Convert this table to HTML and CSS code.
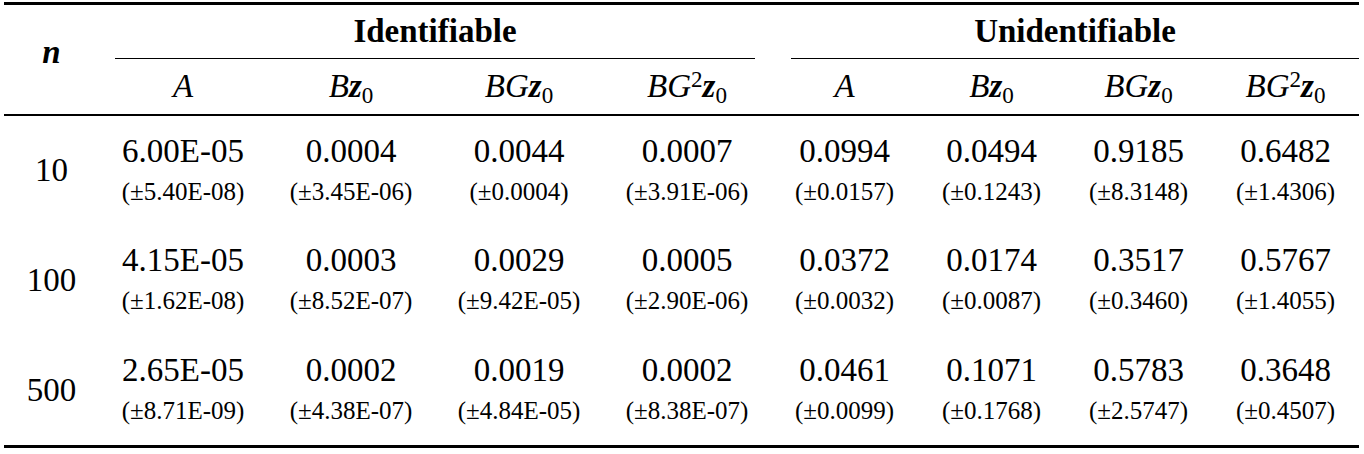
FILE: index.html
```html
<!DOCTYPE html>
<html lang="en">
<head>
    <meta charset="UTF-8">
    <meta name="viewport" content="width=device-width, initial-scale=1.0">
    <title>Identifiable vs Unidentifiable</title>
    <link rel="stylesheet" href="styles.css">
</head>
<body>
    <div class="table-wrap">
        <table class="results">
            <colgroup>
                <col class="col-n">
                <col class="col-id"><col class="col-id"><col class="col-id"><col class="col-id">
                <col class="col-un"><col class="col-un"><col class="col-un"><col class="col-un">
            </colgroup>
            <thead>
                <tr class="group-row">
                    <th rowspan="2" class="n-head"><b><i>n</i></b></th>
                    <th colspan="4"><div class="group trim-lr">Identifiable</div></th>
                    <th colspan="4"><div class="group trim-l">Unidentifiable</div></th>
                </tr>
                <tr class="col-row">
                    <th><i>A</i></th>
                    <th><i>B</i><b><i>z</i></b><sub>0</sub></th>
                    <th><i>BG</i><b><i>z</i></b><sub>0</sub></th>
                    <th><i>BG</i><sup>2</sup><b><i>z</i></b><sub>0</sub></th>
                    <th><i>A</i></th>
                    <th><i>B</i><b><i>z</i></b><sub>0</sub></th>
                    <th><i>BG</i><b><i>z</i></b><sub>0</sub></th>
                    <th><i>BG</i><sup>2</sup><b><i>z</i></b><sub>0</sub></th>
                </tr>
            </thead>
            <tbody>
                <tr>
                    <th>10</th>
                    <td><span class="val">6.00E-05</span><span class="err">(&plusmn;5.40E-08)</span></td>
                    <td><span class="val">0.0004</span><span class="err">(&plusmn;3.45E-06)</span></td>
                    <td><span class="val">0.0044</span><span class="err">(&plusmn;0.0004)</span></td>
                    <td><span class="val">0.0007</span><span class="err">(&plusmn;3.91E-06)</span></td>
                    <td><span class="val">0.0994</span><span class="err">(&plusmn;0.0157)</span></td>
                    <td><span class="val">0.0494</span><span class="err">(&plusmn;0.1243)</span></td>
                    <td><span class="val">0.9185</span><span class="err">(&plusmn;8.3148)</span></td>
                    <td><span class="val">0.6482</span><span class="err">(&plusmn;1.4306)</span></td>
                </tr>
                <tr>
                    <th>100</th>
                    <td><span class="val">4.15E-05</span><span class="err">(&plusmn;1.62E-08)</span></td>
                    <td><span class="val">0.0003</span><span class="err">(&plusmn;8.52E-07)</span></td>
                    <td><span class="val">0.0029</span><span class="err">(&plusmn;9.42E-05)</span></td>
                    <td><span class="val">0.0005</span><span class="err">(&plusmn;2.90E-06)</span></td>
                    <td><span class="val">0.0372</span><span class="err">(&plusmn;0.0032)</span></td>
                    <td><span class="val">0.0174</span><span class="err">(&plusmn;0.0087)</span></td>
                    <td><span class="val">0.3517</span><span class="err">(&plusmn;0.3460)</span></td>
                    <td><span class="val">0.5767</span><span class="err">(&plusmn;1.4055)</span></td>
                </tr>
                <tr>
                    <th>500</th>
                    <td><span class="val">2.65E-05</span><span class="err">(&plusmn;8.71E-09)</span></td>
                    <td><span class="val">0.0002</span><span class="err">(&plusmn;4.38E-07)</span></td>
                    <td><span class="val">0.0019</span><span class="err">(&plusmn;4.84E-05)</span></td>
                    <td><span class="val">0.0002</span><span class="err">(&plusmn;8.38E-07)</span></td>
                    <td><span class="val">0.0461</span><span class="err">(&plusmn;0.0099)</span></td>
                    <td><span class="val">0.1071</span><span class="err">(&plusmn;0.1768)</span></td>
                    <td><span class="val">0.5783</span><span class="err">(&plusmn;2.5747)</span></td>
                    <td><span class="val">0.3648</span><span class="err">(&plusmn;0.4507)</span></td>
                </tr>
            </tbody>
        </table>
    </div>
</body>
</html>
```

FILE: styles.css
```css
body {
    margin: 0;
    padding: 0;
    background-color: #fff;
    color: #000;
    font-family: "Liberation Serif", "Times New Roman", serif;
}

.table-wrap {
    margin: 2px 0 0 4px;
    width: 1355px;
    border-top: 3px solid #000;
    border-bottom: 3px solid #000;
}

.results {
    width: 1355px;
    border-collapse: collapse;
    table-layout: fixed;
    font-size: 33px;
}

.col-n { width: 95px; }
.col-id { width: 168px; }
.col-un { width: 147px; }

.results th,
.results td {
    padding: 0;
    text-align: center;
    vertical-align: middle;
    font-weight: normal;
}

/* Header rows */
.group-row th {
    height: 54px;
}

.group {
    font-weight: bold;
    line-height: 53px;
    border-bottom: 1px solid #000;
}

.group.trim-lr { margin: 0 16px; }
.group.trim-l { margin: 0 0 0 20px; }

.n-head {
    padding-bottom: 14px !important;
    border-bottom: 2px solid #000;
}

.col-row th {
    height: 55px;
    line-height: 55px;
    border-bottom: 2px solid #000;
    white-space: nowrap;
}

.results sub,
.results sup {
    font-size: 0.7em;
    line-height: 0;
    font-style: normal;
}

.results sub { vertical-align: -0.25em; }
.results sup { vertical-align: 0.45em; }

/* Body rows */
.results tbody tr {
    height: 110px;
}

.val {
    display: block;
    line-height: 36px;
}

.err {
    display: block;
    margin-top: 5px;
    font-size: 25px;
    line-height: 35px;
}
```
